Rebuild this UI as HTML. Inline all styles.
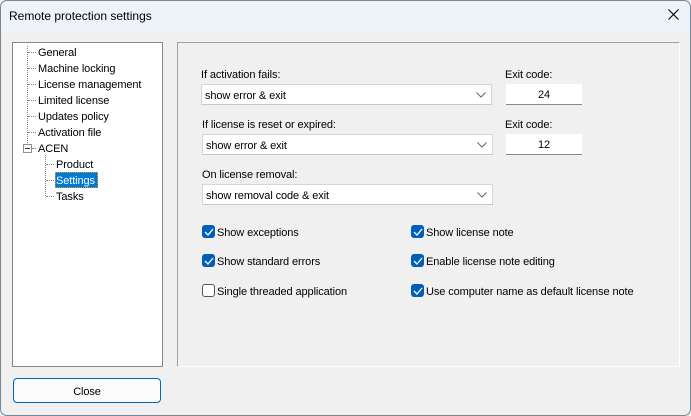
<!DOCTYPE html>
<html><head><meta charset="utf-8"><style>
*{margin:0;padding:0;box-sizing:border-box}
body{width:691px;height:416px;overflow:hidden;background:#f0f0f0;font-family:"Liberation Sans",sans-serif;font-size:11px;letter-spacing:-0.1px;color:#000;position:relative}
.frame{position:absolute;left:0;top:0;width:691px;height:416px;border:1px solid #7a8694;border-radius:7px;pointer-events:none}
.title{position:absolute;left:0;top:0;width:691px;height:31px;background:#eef2f9}
.title span{position:absolute;left:9px;top:9px;font-size:12px;letter-spacing:0}
.x{position:absolute;left:668px;top:9px}
.a{position:absolute;white-space:nowrap;margin-top:2px}
.tree{position:absolute;left:12px;top:42px;width:151px;height:325px;background:#fff;border:1px solid #828790}
.vd{position:absolute;width:1px;border-left:1px dotted #808080}
.hd{position:absolute;height:1px;border-top:1px dotted #808080}
.panel{position:absolute;left:177px;top:42px;width:503px;height:325px;border:1px solid;border-color:#a0a0a0 #fff #fff #a0a0a0}
.combo{position:absolute;width:291px;height:21px;background:#fff;border:1px solid #d6d6d6;border-bottom-color:#c8c8c8}
.combo span{position:absolute;left:3px;top:5px}
.combo svg{position:absolute;right:5px;top:7px}
.edit{position:absolute;width:76px;height:21px;background:#fff;border-bottom:1px solid #8a8a8a;text-align:center;padding-top:5px}
.cb{position:absolute;width:13px;height:13px;border-radius:3px;background:#005fb8}
.cb svg{position:absolute;left:2px;top:3px}
.cbe{background:#fff;border:1px solid #555}
.btn{position:absolute;left:13px;top:378px;width:148px;height:25px;border:1px solid #0067c0;border-radius:4px;background:#fbfbfb;text-align:center;padding-top:7px}
</style></head><body>
<div class="title"><span>Remote protection settings</span>
<svg class="x" width="11" height="11" viewBox="0 0 11 11"><path d="M0.5 0.5L10.5 10.5M10.5 0.5L0.5 10.5" stroke="#000" stroke-width="1.1"/></svg></div>

<div class="tree"></div>
<div class="vd" style="left:27px;top:46px;height:99px"></div>
<div class="hd" style="left:28px;top:52px;width:8px"></div>
<div class="hd" style="left:28px;top:68px;width:8px"></div>
<div class="hd" style="left:28px;top:84px;width:8px"></div>
<div class="hd" style="left:28px;top:100px;width:8px"></div>
<div class="hd" style="left:28px;top:116px;width:8px"></div>
<div class="hd" style="left:28px;top:132px;width:8px"></div>
<div class="hd" style="left:32px;top:148px;width:4px"></div>
<div style="position:absolute;left:23px;top:144px;width:9px;height:9px;border:1px solid #919191;background:#fff"><div style="position:absolute;left:1px;top:3px;width:5px;height:1px;background:#333"></div></div>
<div class="vd" style="left:45px;top:155px;height:41px"></div>
<div class="hd" style="left:46px;top:164px;width:8px"></div>
<div class="hd" style="left:46px;top:180px;width:8px"></div>
<div class="hd" style="left:46px;top:196px;width:8px"></div>
<div class="a" style="left:38px;top:45px">General</div>
<div class="a" style="left:38px;top:61px">Machine locking</div>
<div class="a" style="left:38px;top:77px">License management</div>
<div class="a" style="left:38px;top:93px">Limited license</div>
<div class="a" style="left:38px;top:109px">Updates policy</div>
<div class="a" style="left:38px;top:125px">Activation file</div>
<div class="a" style="left:38px;top:141px">ACEN</div>
<div class="a" style="left:56px;top:157px">Product</div>
<div class="a" style="left:55px;top:172px;margin-top:0;width:43px;height:16px;background:#0078d7;color:#fff;outline:1px dotted #f0a000;outline-offset:-1px;padding:3px 0 0 1px">Settings</div>
<div class="a" style="left:56px;top:189px">Tasks</div>

<div class="panel"></div>

<div class="a" style="left:201px;top:67px">If activation fails:</div>
<div class="combo" style="left:201px;top:84px"><span>show error &amp; exit</span><svg width="10" height="6"><path d="M0.5 0.5L5 5L9.5 0.5" stroke="#666" fill="none"/></svg></div>
<div class="a" style="left:505px;top:67px">Exit code:</div>
<div class="edit" style="left:506px;top:84px">24</div>

<div class="a" style="left:202px;top:117px">If license is reset or expired:</div>
<div class="combo" style="left:202px;top:134px"><span>show error &amp; exit</span><svg width="10" height="6"><path d="M0.5 0.5L5 5L9.5 0.5" stroke="#666" fill="none"/></svg></div>
<div class="a" style="left:505px;top:117px">Exit code:</div>
<div class="edit" style="left:506px;top:134px">12</div>

<div class="a" style="left:202px;top:167px">On license removal:</div>
<div class="combo" style="left:202px;top:184px"><span>show removal code &amp; exit</span><svg width="10" height="6"><path d="M0.5 0.5L5 5L9.5 0.5" stroke="#666" fill="none"/></svg></div>

<div class="cb" style="left:202px;top:225px"><svg width="10" height="8"><path d="M1 4L4 7L9 1" stroke="#fff" fill="none" stroke-width="1.3"/></svg></div>
<div class="a" style="left:217px;top:225px">Show exceptions</div>
<div class="cb" style="left:202px;top:254px"><svg width="10" height="8"><path d="M1 4L4 7L9 1" stroke="#fff" fill="none" stroke-width="1.3"/></svg></div>
<div class="a" style="left:217px;top:254px">Show standard errors</div>
<div class="cb cbe" style="left:202px;top:284px"></div>
<div class="a" style="left:217px;top:284px">Single threaded application</div>

<div class="cb" style="left:411px;top:225px"><svg width="10" height="8"><path d="M1 4L4 7L9 1" stroke="#fff" fill="none" stroke-width="1.3"/></svg></div>
<div class="a" style="left:426px;top:225px">Show license note</div>
<div class="cb" style="left:411px;top:254px"><svg width="10" height="8"><path d="M1 4L4 7L9 1" stroke="#fff" fill="none" stroke-width="1.3"/></svg></div>
<div class="a" style="left:426px;top:254px">Enable license note editing</div>
<div class="cb" style="left:411px;top:284px"><svg width="10" height="8"><path d="M1 4L4 7L9 1" stroke="#fff" fill="none" stroke-width="1.3"/></svg></div>
<div class="a" style="left:426px;top:284px">Use computer name as default license note</div>

<div class="btn">Close</div>
<div class="frame"></div>
</body></html>
